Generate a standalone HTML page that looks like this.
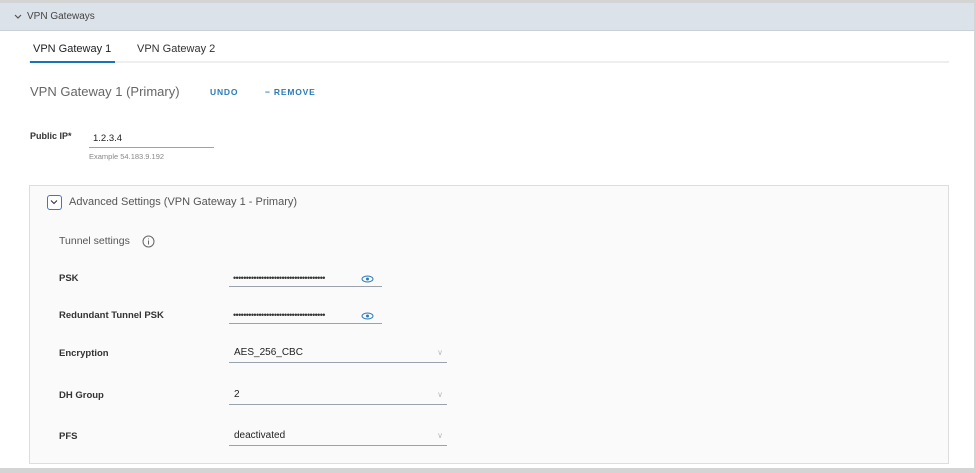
<!DOCTYPE html>
<html><head><style>
*{margin:0;padding:0;box-sizing:border-box}
body{width:976px;height:473px;background:#d4d4d4;font-family:"Liberation Sans",sans-serif;position:relative;overflow:hidden}
.frame{position:absolute;left:0;top:3px;width:974px;height:465px;background:#fff}
.hdr{position:absolute;left:0;top:0;width:974px;height:28px;background:#dbe2e9;border-bottom:1px solid #c9d0d6;font-size:10px;color:#444;line-height:27px;padding-left:27px}
.hdr svg{position:absolute;left:14px;top:11px}
.a{position:absolute;white-space:nowrap}
.tabs{position:absolute;left:29px;top:58px;width:920px;height:2px;background:#eee}
.lbl{font-size:9.5px;font-weight:bold;color:#333}
.in{position:absolute;border-bottom:1px solid #9aa3ab;font-size:10px;color:#222}
.pw{font-size:9px;letter-spacing:-0.6px;color:#333;padding-top:3px}
.panel{position:absolute;left:29px;top:182px;width:920px;height:279px;background:#fafafa;border:1px solid #ddd}
.car{position:absolute;right:4px;top:2px;color:#bbb;font-size:8px}
</style></head><body>
<div class="frame">
<div class="hdr"><svg width="8" height="6" viewBox="0 0 8 6"><path d="M1 1l3 3 3-3" stroke="#555" fill="none" stroke-width="1.2"/></svg>VPN Gateways</div>
<div class="tabs"></div>
<div class="a" style="left:33px;top:40px;font-size:11px;color:#222">VPN Gateway 1</div>
<div class="a" style="left:30px;top:58px;width:85px;height:2px;background:#1a73b8"></div>
<div class="a" style="left:137px;top:40px;font-size:11px;color:#333">VPN Gateway 2</div>
<div class="a" style="left:30px;top:81px;font-size:13px;color:#666">VPN Gateway 1 (Primary)</div>
<div class="a" style="left:210px;top:84px;font-size:8.5px;font-weight:bold;color:#2b7bb9;letter-spacing:.8px">UNDO</div>
<div class="a" style="left:265px;top:84px;font-size:8.5px;font-weight:bold;color:#2b7bb9;letter-spacing:.8px">− REMOVE</div>
<div class="a lbl" style="left:30px;top:128px;font-size:9px">Public IP*</div>
<div class="in" style="left:89px;top:127px;width:125px;height:18px;padding-left:4px;padding-top:3px;font-size:9.5px">1.2.3.4</div>
<div class="a" style="left:89px;top:149px;font-size:7.5px;color:#888">Example 54.183.9.192</div>
<div class="panel">
<div class="a" style="left:17px;top:9px;width:15px;height:15px;border:1.5px solid #3d73d6;border-radius:3px;background:#fff"><svg width="12" height="12" viewBox="0 0 12 12" style="position:absolute;left:0;top:0"><path d="M3 4.5l3 3 3-3" stroke="#333" fill="none" stroke-width="1.1"/></svg></div>
<div class="a" style="left:39px;top:10px;font-size:11px;color:#555">Advanced Settings (VPN Gateway 1 - Primary)</div>
<div class="a" style="left:29px;top:49px;font-size:10.5px;color:#555">Tunnel settings</div>
<svg class="a" style="left:112px;top:49px" width="13" height="13" viewBox="0 0 13 13"><circle cx="6.5" cy="6.5" r="5.5" stroke="#666" fill="none"/><path d="M6.5 5.5v4M6.5 3.5v.8" stroke="#666"/></svg>
<div class="a lbl" style="left:29px;top:87px">PSK</div>
<div class="in pw" style="left:199px;top:84px;width:153px;height:17px;padding-left:4px">••••••••••••••••••••••••••••••••••••</div>
<div class="a lbl" style="left:29px;top:124px">Redundant Tunnel PSK</div>
<div class="in pw" style="left:199px;top:121px;width:153px;height:17px;padding-left:4px">••••••••••••••••••••••••••••••••••••</div>
<svg class="a" style="left:331px;top:89px" width="13" height="8" viewBox="0 0 13 8"><ellipse cx="6.5" cy="4" rx="5.5" ry="3" stroke="#2b7bb9" fill="none"/><circle cx="6.5" cy="4" r="1.5" fill="#2b7bb9"/></svg>
<svg class="a" style="left:331px;top:126px" width="13" height="8" viewBox="0 0 13 8"><ellipse cx="6.5" cy="4" rx="5.5" ry="3" stroke="#2b7bb9" fill="none"/><circle cx="6.5" cy="4" r="1.5" fill="#2b7bb9"/></svg>
<div class="a lbl" style="left:29px;top:162px">Encryption</div>
<div class="in" style="left:199px;top:160px;width:218px;height:17px;padding-left:5px;padding-top:1px">AES_256_CBC<span class="car">∨</span></div>
<div class="a lbl" style="left:29px;top:204px">DH Group</div>
<div class="in" style="left:199px;top:202px;width:218px;height:17px;padding-left:5px;padding-top:1px">2<span class="car">∨</span></div>
<div class="a lbl" style="left:29px;top:245px">PFS</div>
<div class="in" style="left:199px;top:243px;width:218px;height:17px;padding-left:5px;padding-top:1px">deactivated<span class="car">∨</span></div>
</div>
</div>
</body></html>
